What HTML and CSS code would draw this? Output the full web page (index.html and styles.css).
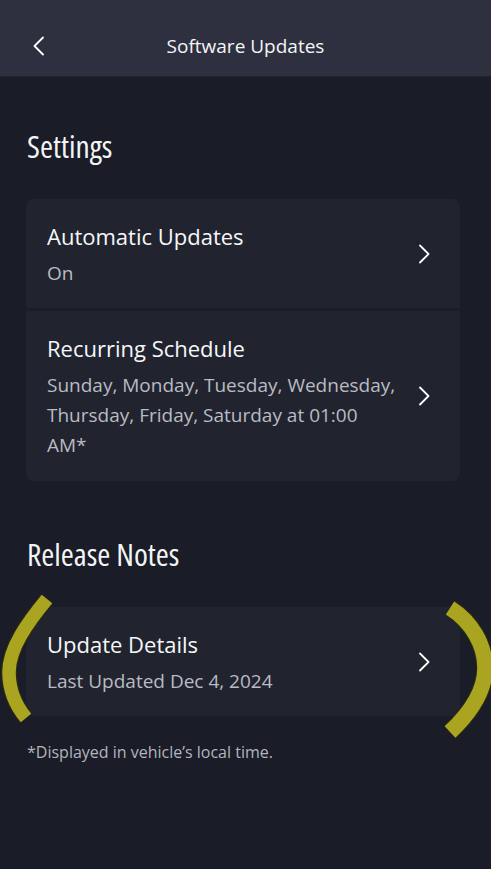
FILE: index.html
```html
<!DOCTYPE html>
<html lang="en">
<head>
<meta charset="utf-8">
<title>Software Updates</title>
<link rel="stylesheet" href="styles.css">
</head>
<body>
<div class="app">
  <header class="topbar">
    <button class="back" aria-label="Back">
      <svg width="14" height="20" viewBox="0 0 14 20"><path d="M11 1.5 L2.5 10 L11 18.5" fill="none" stroke="#ffffff" stroke-width="1.8" stroke-linecap="round" stroke-linejoin="round"/></svg>
    </button>
    <h1 class="title">Software Updates</h1>
  </header>

  <main class="content">
    <h2 class="section-title first">Settings</h2>
    <div class="card">
      <div class="row row-auto">
        <div class="row-text">
          <div class="row-label">Automatic Updates</div>
          <div class="row-value">On</div>
        </div>
        <svg class="chev" width="14" height="20" viewBox="0 0 14 20"><path d="M3 1.5 L11.5 10 L3 18.5" fill="none" stroke="#ffffff" stroke-width="1.8" stroke-linecap="round" stroke-linejoin="round"/></svg>
      </div>
      <div class="row row-sched">
        <div class="row-text">
          <div class="row-label">Recurring Schedule</div>
          <div class="row-value multi">Sunday, Monday, Tuesday, Wednesday, Thursday, Friday, Saturday at 01:00 AM*</div>
        </div>
        <svg class="chev" width="14" height="20" viewBox="0 0 14 20"><path d="M3 1.5 L11.5 10 L3 18.5" fill="none" stroke="#ffffff" stroke-width="1.8" stroke-linecap="round" stroke-linejoin="round"/></svg>
      </div>
    </div>

    <h2 class="section-title second">Release Notes</h2>
    <div class="card">
      <div class="row row-notes">
        <div class="row-text">
          <div class="row-label">Update Details</div>
          <div class="row-value">Last Updated Dec 4, 2024</div>
        </div>
        <svg class="chev" width="14" height="20" viewBox="0 0 14 20"><path d="M3 1.5 L11.5 10 L3 18.5" fill="none" stroke="#ffffff" stroke-width="1.8" stroke-linecap="round" stroke-linejoin="round"/></svg>
      </div>
    </div>

    <p class="footnote">*Displayed in vehicle’s local time.</p>
  </main>

  <svg class="marks" width="491" height="869" viewBox="0 0 491 869" aria-hidden="true">
    <path d="M47 599 C 28 622, 9 648, 9 672 C 9 692, 16 706, 26 718" fill="none" stroke="#2a2816" stroke-width="16" stroke-linecap="butt"/>
    <path d="M47 599 C 28 622, 9 648, 9 672 C 9 692, 16 706, 26 718" fill="none" stroke="#a9a520" stroke-width="13.5" stroke-linecap="butt"/>
    <path d="M450 608 C 472 622, 485 645, 485 668 C 485 692, 468 715, 450 732" fill="none" stroke="#2a2816" stroke-width="18" stroke-linecap="butt"/>
    <path d="M450 608 C 472 622, 485 645, 485 668 C 485 692, 468 715, 450 732" fill="none" stroke="#a9a520" stroke-width="15.5" stroke-linecap="butt"/>
  </svg>
</div>
</body>
</html>
```

FILE: styles.css
```css
* { box-sizing: border-box; }
html, body {
  margin: 0;
  padding: 0;
  background: #1a1c27;
}
body {
  font-family: "Open Sans", "DejaVu Sans", sans-serif;
  color: #ffffff;
}
.app {
  position: relative;
  width: 491px;
  min-height: 869px;
  background: #1a1c27;
  overflow: hidden;
}
.topbar {
  height: 77px;
  background: #2e303f;
  border-bottom: 1px solid #22242f;
  display: flex;
  align-items: flex-start;
  justify-content: center;
  padding-top: 34px;
  position: relative;
}
.back {
  position: absolute;
  left: 32px;
  top: 36px;
  background: none;
  border: 0;
  padding: 0;
  width: 16px;
  height: 20px;
  display: flex;
}
.title {
  margin: 0;
  font-size: 19px;
  line-height: 24px;
  font-weight: 400;
  color: #f4f5f8;
}
.content {
  padding: 0 31px 0 26px;
}
.section-title {
  margin: 0;
  font-family: "Open Sans", sans-serif;
  font-stretch: 87%;
  font-weight: 400;
  font-size: 31.5px;
  line-height: 36px;
  letter-spacing: 0;
  color: #f3f4f7;
  padding-left: 1px;
}
.section-title.first { padding-top: 51px; padding-bottom: 35px; }
.section-title.second { padding-top: 55px; padding-bottom: 35px; }
.card {
  background: #21242f;
  border-radius: 8px;
  overflow: hidden;
}
.row {
  display: flex;
  align-items: center;
  padding: 0 29px 0 21px;
}
.row + .row { border-top: 3px solid #1b1d28; }
.row-auto, .row-notes { height: 109px; }
.row-sched { height: 173px; }
.row-text {
  flex: 1;
  min-width: 0;
  align-self: flex-start;
  padding-top: 24px;
}
.row-label {
  font-size: 22px;
  line-height: 26px;
  color: #f6f7fa;
}
.row-value {
  margin-top: 9px;
  font-size: 19px;
  line-height: 30px;
  color: #b9bbc3;
}
.row-value.multi { max-width: 350px; }
.chev { flex: none; }
.footnote {
  margin: 25px 0 0 1px;
  font-size: 16px;
  line-height: 22px;
  color: #b3b5bd;
}
.marks {
  position: absolute;
  left: 0;
  top: 0;
  pointer-events: none;
}
```
